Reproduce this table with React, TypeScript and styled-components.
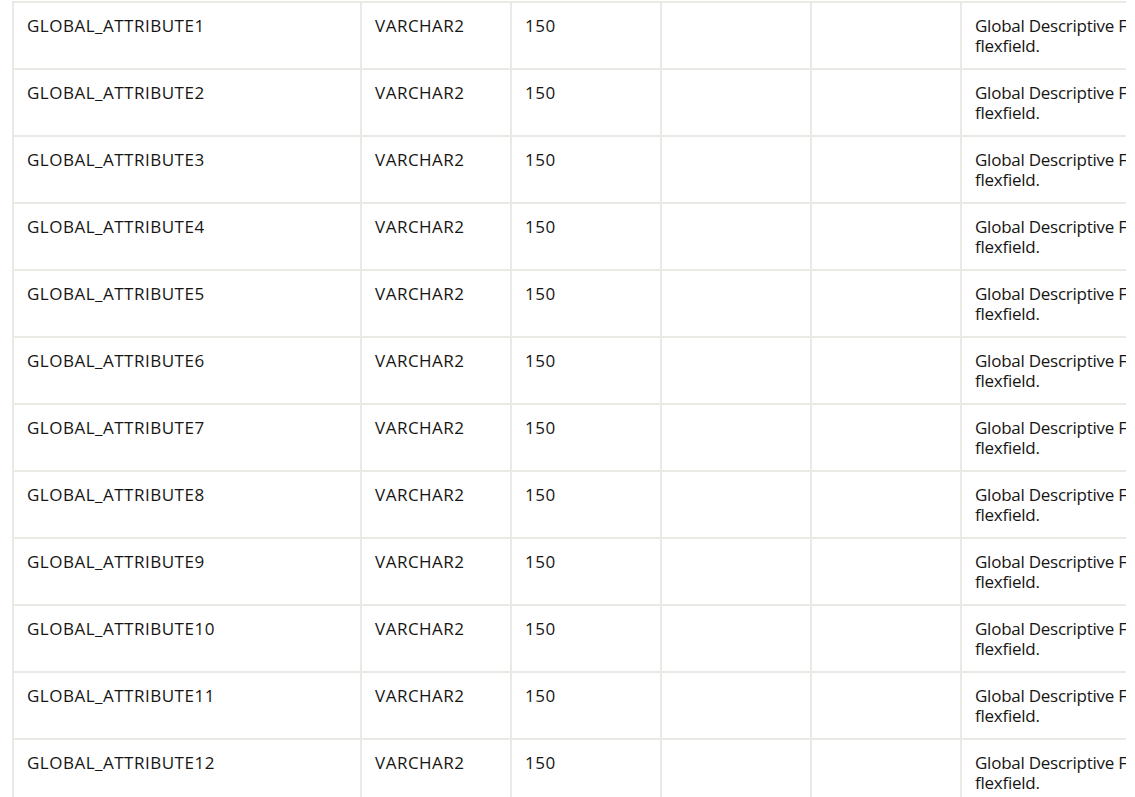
import React from "react";
import styled, { createGlobalStyle } from "styled-components";

const GlobalStyle = createGlobalStyle`
  html, body {
    margin: 0;
    padding: 0;
    background: #ffffff;
    overflow: hidden;
  }
  body {
    font-family: "Open Sans", "Noto Sans", sans-serif;
    color: #161513;
  }
`;

const Viewport = styled.div`
  width: 1126px;
  height: 797px;
  overflow: hidden;
  padding: 1px 0 0 12px;
  box-sizing: border-box;
`;

const Table = styled.div`
  display: flex;
  flex-direction: column;
  width: 1700px;
`;

const Row = styled.div`
  display: grid;
  grid-template-columns: 348px 150px 150px 150px 150px 1fr;
  border-top: 2px solid #ebe9e4;
`;

const Cell = styled.div<{ $prose?: boolean }>`
  border-left: 2px solid #ebe9e4;
  padding: 13px 13px 12px 13px;
  font-size: 17px;
  letter-spacing: ${(p) => (p.$prose ? "-0.25px" : "0.5px")};
  line-height: 20px;
  min-height: 40px;
  white-space: pre-line;
`;

const rows = Array.from({ length: 12 }, (_, i) => `GLOBAL_ATTRIBUTE${i + 1}`);

export default function App() {
  return (
    <>
      <GlobalStyle />
      <Viewport>
        <Table>
          {rows.map((name) => (
            <Row key={name}>
              <Cell>{name}</Cell>
              <Cell>VARCHAR2</Cell>
              <Cell>150</Cell>
              <Cell />
              <Cell />
              <Cell $prose>{"Global Descriptive Flexfield: segment of the global descriptive\nflexfield."}</Cell>
            </Row>
          ))}
        </Table>
      </Viewport>
    </>
  );
}
